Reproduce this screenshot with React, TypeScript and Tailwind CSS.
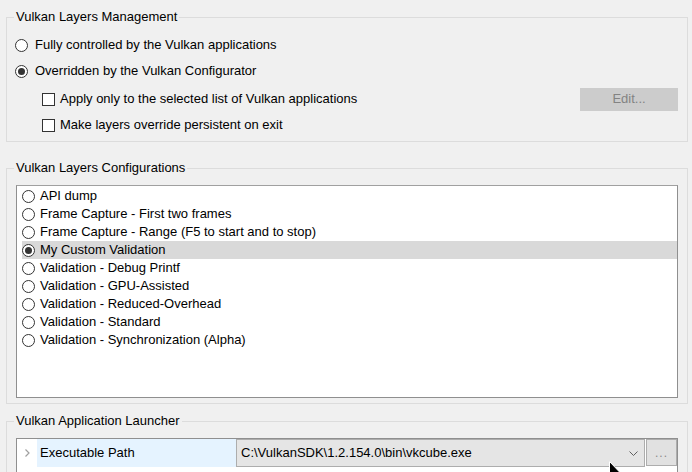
import React from "react";

const configs = [
  "API dump",
  "Frame Capture - First two frames",
  "Frame Capture - Range (F5 to start and to stop)",
  "My Custom Validation",
  "Validation - Debug Printf",
  "Validation - GPU-Assisted",
  "Validation - Reduced-Overhead",
  "Validation - Standard",
  "Validation - Synchronization (Alpha)",
];

function Radio({ checked }: { checked?: boolean }) {
  return (
    <span className="w-[13px] h-[13px] rounded-full border border-[#333333] bg-white flex items-center justify-center shrink-0">
      {checked && <span className="w-[7px] h-[7px] rounded-full bg-[#333333]" />}
    </span>
  );
}

function Checkbox() {
  return <span className="w-[13px] h-[13px] border border-[#333333] bg-white shrink-0" />;
}

function Legend({ children }: { children: React.ReactNode }) {
  return <legend className="ml-[7px] px-[2px] leading-[16px]">{children}</legend>;
}

export default function App() {
  const selected = "My Custom Validation";

  return (
    <div className="relative w-[692px] h-[472px] overflow-hidden bg-[#f0f0f0] pl-[6px] pr-[4px] pt-[9px] font-['Liberation_Sans',Arial,sans-serif] text-[13px] text-black">
      {/* Layers management */}
      <fieldset className="border border-[#dcdcdc]">
        <Legend>Vulkan Layers Management</Legend>
        <div className="pl-[8px] pr-[9px] pt-[7px] pb-[5px]">
          <div className="h-[26px] flex items-center gap-[7px]">
            <Radio />
            <span>Fully controlled by the Vulkan applications</span>
          </div>
          <div className="h-[26px] flex items-center gap-[7px]">
            <Radio checked />
            <span>Overridden by the Vulkan Configurator</span>
          </div>
          <div className="h-[30px] flex items-center pl-[27px]">
            <Checkbox />
            <span className="ml-[5px]">Apply only to the selected list of Vulkan applications</span>
            <button className="ml-auto w-[98px] h-[23px] bg-[#cccccc] text-[#838383]">Edit...</button>
          </div>
          <div className="h-[22px] flex items-center pl-[27px]">
            <Checkbox />
            <span className="ml-[5px]">Make layers override persistent on exit</span>
          </div>
        </div>
      </fieldset>

      {/* Configurations */}
      <fieldset className="mt-[18px] border border-[#dcdcdc]">
        <Legend>Vulkan Layers Configurations</Legend>
        <div className="pl-[9px] pr-[9px] pt-[9px] pb-[5px]">
          <div className="h-[213px] bg-white border border-[#8f8f8f] border-t-[#a0a0a0] pt-px pl-[5px]">
            {configs.map((c) => (
              <div
                key={c}
                className={`h-[18px] flex items-center gap-[5px] ${c === selected ? "bg-[#d9d9d9]" : ""}`}
              >
                <Radio checked={c === selected} />
                <span>{c}</span>
              </div>
            ))}
          </div>
        </div>
      </fieldset>

      {/* Launcher */}
      <fieldset className="mt-[9px] border border-[#dcdcdc]">
        <Legend>Vulkan Application Launcher</Legend>
        <div className="pl-[9px] pr-[9px] pt-[9px]">
          <div className="h-[60px] bg-white border border-[#8f8f8f]">
            <div className="h-[28px] flex">
              <div className="w-[20px] flex items-center justify-center">
                <svg width="5" height="8" viewBox="0 0 5 8">
                  <path d="M0.5 0.5 L4 4 L0.5 7.5" fill="none" stroke="#a0a0a0" strokeWidth="1.2" />
                </svg>
              </div>
              <div className="w-[199px] bg-[#e5f3ff] flex items-center pl-[3px]">Executable Path</div>
              <div className="w-[409px] bg-[#e5e5e5] border border-[#adadad] flex items-center pl-[4px] pr-[6px]">
                <span className="flex-1">C:\VulkanSDK\1.2.154.0\bin\vkcube.exe</span>
                <svg width="9" height="5" viewBox="0 0 9 5">
                  <path d="M0.5 0.5 L4.5 4.5 L8.5 0.5" fill="none" stroke="#606060" strokeWidth="1" />
                </svg>
              </div>
              <div className="w-[31px] ml-px h-[27px] bg-[#e1e1e1] border border-[#adadad] flex items-center justify-center text-[#8a8a8a] text-[12px] tracking-[1px]">
                ...
              </div>
            </div>
          </div>
        </div>
      </fieldset>

      {/* mouse cursor */}
      <svg className="absolute left-[609px] top-[461px]" width="12" height="19" viewBox="0 0 12 19">
        <path d="M0.5 0.5 L0.5 16 L4 12.5 L6.5 18 L8.5 17 L6 11.5 L11 11.5 Z" fill="#000" stroke="#fff" strokeWidth="1" />
      </svg>
    </div>
  );
}
